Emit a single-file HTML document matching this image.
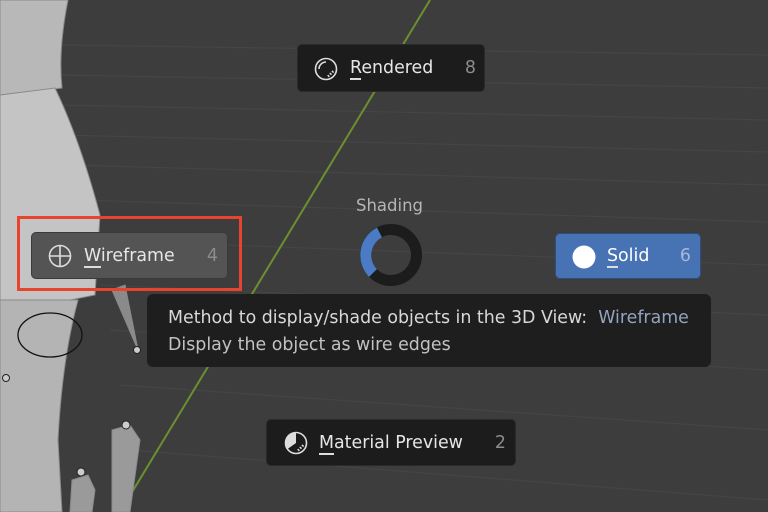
<!DOCTYPE html>
<html><head><style>
body{margin:0;width:768px;height:512px;overflow:hidden;background:#3d3d3d;font-family:"DejaVu Sans","Liberation Sans",sans-serif;position:relative}
.b{position:absolute;border-radius:5px;color:#e6e6e6;font-size:17.4px;box-sizing:border-box}
.b span.k{position:absolute;right:9px;color:#8c8c8c}
.b .t{position:absolute}
u{text-decoration:none;border-bottom:2px solid #ddd;}
</style></head><body>
<svg width="768" height="512" style="position:absolute;left:0;top:0">
<g stroke="#454545" stroke-width="1.2" fill="none">
<path d="M60 45 L768 55"/><path d="M60 75 L768 88"/><path d="M60 105 L768 120"/><path d="M60 135 L768 152"/><path d="M70 165 L768 185"/><path d="M80 200 L768 222"/><path d="M90 240 L768 265"/><path d="M100 285 L768 315"/><path d="M110 330 L768 370"/><path d="M120 385 L768 430"/><path d="M130 450 L768 500"/>
</g>
<path d="M120 512 L430 0" stroke="#6d8f2f" stroke-width="2"/>
<g stroke="#8a8a8a">
<path d="M0 0 L68 0 Q58 50 62 88 L0 95Z" fill="#b8b8b8"/>
<path d="M0 95 L55 88 Q80 140 100 215 L95 295 L20 310 L0 300Z" fill="#c4c4c4"/>
<path d="M10 300 L78 300 Q62 360 58 440 L62 512 L0 512 L0 300Z" fill="#b4b4b4"/>
<path d="M112 430 L130 425 L140 440 L130 512 L112 512Z" fill="#9a9a9a"/>
<path d="M72 480 L88 475 L95 490 L92 512 L70 512Z" fill="#9a9a9a"/>
<path d="M112 290 L125 285 L138 350 Z" fill="#8a8a8a"/>
</g>
<ellipse cx="50" cy="335" rx="32" ry="22" fill="none" stroke="#111" stroke-width="1.3"/>
<circle cx="137" cy="350" r="3.5" fill="#ccc" stroke="#222"/>
<circle cx="6" cy="378" r="3.5" fill="#ccc" stroke="#222"/>
<circle cx="126" cy="425" r="4" fill="#ccc" stroke="#222"/>
<circle cx="81" cy="472" r="4" fill="#ccc" stroke="#222"/>
<circle cx="391" cy="255" r="25.5" fill="none" stroke="#1c1c1c" stroke-width="11"/>
<path d="M379.5 232.5 A25.5 25.5 0 0 0 373 273" fill="none" stroke="#4a7bc4" stroke-width="11"/>
<rect x="18.5" y="217.5" width="222" height="72" fill="none" stroke="#e8432d" stroke-width="3"/>
</svg>
<div style="position:absolute;left:356px;top:196px;font-size:16.5px;color:#b5b5b5">Shading</div>

<div class="b" style="left:297px;top:44px;width:188px;height:48px;background:#1c1c1c;border:1px solid #2a2a2a">
<svg style="position:absolute;left:16px;top:12px" width="24" height="24"><circle cx="12" cy="12" r="10.5" fill="none" stroke="#ddd" stroke-width="1.6"/><path d="M5 12 A7 7 0 0 1 12 5" stroke="#ddd" stroke-width="1.6" fill="none"/><path d="M14 19.5 L19.5 14" stroke="#ddd" stroke-width="2.4" stroke-dasharray="1.5 1.5"/></svg>
<span class="t" style="left:52px;top:13px"><u>R</u>endered</span><span class="k" style="top:13px;right:8px">8</span></div>

<div class="b" style="left:31px;top:232px;width:197px;height:47px;background:#545454;border:1px solid #3a3a3a">
<svg style="position:absolute;left:16px;top:11px" width="24" height="24" fill="none" stroke="#ddd" stroke-width="1.6"><circle cx="12" cy="12" r="10.5"/><path d="M1.5 12 H22.5 M12 1.5 V22.5"/></svg>
<span class="t" style="left:52px;top:13px"><u>W</u>ireframe</span><span class="k" style="top:13px">4</span></div>

<div class="b" style="left:555px;top:233px;width:146px;height:46px;background:#4772b3;border:1px solid #2f4e80">
<svg style="position:absolute;left:16px;top:11px" width="24" height="24"><circle cx="12" cy="12" r="11.5" fill="#fff"/></svg>
<span class="t" style="left:51px;top:12px;color:#fff"><u>S</u>olid</span><span class="k" style="top:12px;color:#a8b8d4">6</span></div>

<div style="position:absolute;left:147px;top:294px;width:564px;height:73px;background:#1e1e1e;border-radius:6px;font-size:17.4px;color:#d8d8d8">
<div style="position:absolute;left:21px;top:14px;white-space:nowrap">Method to display/shade objects in the 3D View:&nbsp; <span style="color:#93a3bf">Wireframe</span></div>
<div style="position:absolute;left:21px;top:41px;color:#c2c2c2">Display the object as wire edges</div></div>

<div class="b" style="left:266px;top:419px;width:250px;height:47px;background:#1c1c1c;border:1px solid #2a2a2a">
<svg style="position:absolute;left:17px;top:11px" width="24" height="24"><circle cx="12" cy="12" r="10.5" fill="none" stroke="#ddd" stroke-width="1.6"/><path d="M12 1.5 A10.5 10.5 0 0 0 3.5 18 L12 12Z" fill="#ddd"/><path d="M14 19.5 L19.5 14" stroke="#ddd" stroke-width="2.4" stroke-dasharray="1.5 1.5"/></svg>
<span class="t" style="left:52px;top:13px"><u>M</u>aterial Preview</span><span class="k" style="top:13px">2</span></div>
</body></html>
